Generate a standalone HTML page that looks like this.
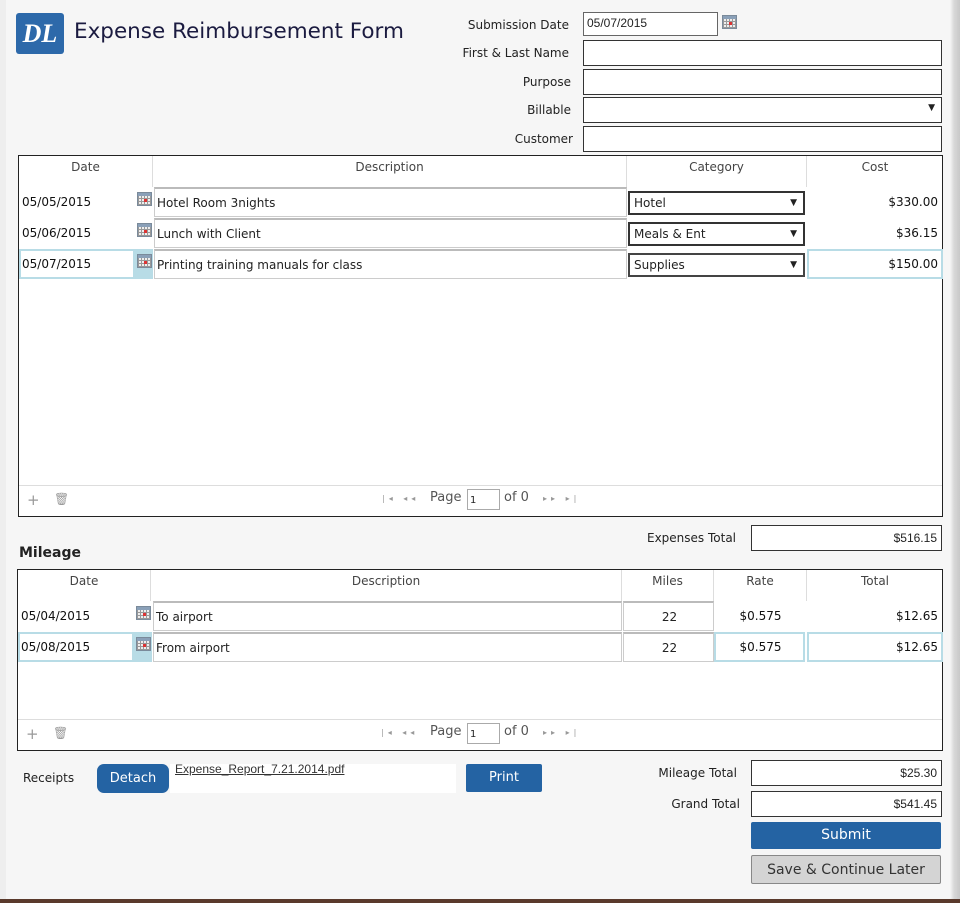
<!DOCTYPE html>
<html><head><meta charset="utf-8"><style>
*{box-sizing:border-box;margin:0;padding:0}
body{width:960px;height:903px;background:#f6f6f6;font-family:"DejaVu Sans","Liberation Sans",sans-serif;font-size:12px;color:#222;position:relative;overflow:hidden}
.a{position:absolute}
.lbl{position:absolute;text-align:right;font-size:12px;color:#222}
.inp{position:absolute;background:#fff;border:1px solid #333}
.tot{text-align:right;padding:0 4px;line-height:24px;font-size:12px;font-family:'Liberation Sans',sans-serif}
.cal{position:absolute;width:15px;height:14px;border:1px solid #7a8a9a;background:
linear-gradient(#8aa0b8 0 3px,transparent 3px),
repeating-linear-gradient(0deg,#999 0 1px,#eee 1px 3px),#eee}
.cal::before{content:"";position:absolute;inset:3px 0 0 0;background:repeating-linear-gradient(90deg,#999 0 1px,transparent 1px 3px)}
.cal::after{content:"";position:absolute;left:6px;top:6px;width:3px;height:3px;background:#d33}
.grid{position:absolute;background:#fff;border:1px solid #222}
.hd{position:absolute;top:0;height:31px;line-height:22px;text-align:center;color:#444;font-size:12px;border-right:1px solid #ddd}
.cell{position:absolute;height:30px;line-height:30px;font-size:12px;color:#111;white-space:nowrap}
.txt{position:absolute;background:#fff;border:1px solid #ccc;border-top:2px solid #bbb;height:30px;line-height:28px;padding-left:2px;font-size:12px}
.sel{position:absolute;background:#fff;border:2px solid #333;height:24px;line-height:20px;padding-left:4px;font-size:12px}
.sel::after{content:"▼";position:absolute;right:6px;font-size:9px}
.foc{border:2px solid #b8dce6!important}
.ft{position:absolute;left:0;right:0;bottom:0;height:31px;border-top:1px solid #ddd;color:#999}
.btn{position:absolute;background:#2463a3;color:#fff;text-align:center;font-size:13px}
</style></head><body>
<div class="a" style="right:0;top:0;width:10px;height:903px;background:linear-gradient(90deg,#f6f6f6,#d8d8d8 40%,#c8c8c8)"></div>
<div class="a" style="left:0;top:0;width:6px;height:903px;background:#eee"></div>
<div class="a" style="left:0;bottom:0;width:960px;height:4px;background:#5a3a2c"></div>

<div class="a" style="left:16px;top:13px;width:48px;height:41px;background:#2d69aa;border-radius:3px;color:#fff;font:italic bold 26px 'Liberation Serif',serif;line-height:41px;text-align:center">DL</div>
<div class="a" style="left:74px;top:19px;font-size:21.5px;color:#1b1b40">Expense Reimbursement Form</div>

<div class="lbl" style="left:400px;width:169px;top:18px">Submission Date</div>
<div class="lbl" style="left:400px;width:169px;top:46px">First &amp; Last Name</div>
<div class="lbl" style="left:400px;width:171px;top:75px">Purpose</div>
<div class="lbl" style="left:400px;width:171px;top:103px">Billable</div>
<div class="lbl" style="left:400px;width:173px;top:132px">Customer</div>
<div class="inp" style="left:583px;top:12px;width:135px;height:24px;border-color:#666;padding:0 3px;line-height:20px;font-size:12px;font-family:'Liberation Sans',sans-serif">05/07/2015</div>
<div class="cal" style="left:722px;top:15px"></div>
<div class="inp" style="left:583px;top:40px;width:359px;height:26px"></div>
<div class="inp" style="left:583px;top:69px;width:359px;height:26px"></div>
<div class="inp" style="left:583px;top:97px;width:359px;height:26px"><span style="position:absolute;right:6px;top:5px;font-size:9px">▼</span></div>
<div class="inp" style="left:583px;top:126px;width:359px;height:26px"></div>

<div class="grid" style="left:18px;top:155px;width:925px;height:362px">
<div class="hd" style="left:0;width:134px">Date</div>
<div class="hd" style="left:134px;width:474px">Description</div>
<div class="hd" style="left:608px;width:180px">Category</div>
<div class="hd" style="left:788px;width:136px;border:0">Cost</div>

<div class="cell" style="left:3px;top:31px">05/05/2015</div><div class="cal" style="left:118px;top:36px"></div>
<div class="txt" style="left:135px;top:31px;width:473px">Hotel Room 3nights</div>
<div class="sel" style="left:609px;top:35px;width:177px">Hotel</div>
<div class="cell" style="right:4px;top:31px">$330.00</div>

<div class="cell" style="left:3px;top:62px">05/06/2015</div><div class="cal" style="left:118px;top:67px"></div>
<div class="txt" style="left:135px;top:62px;width:473px">Lunch with Client</div>
<div class="sel" style="left:609px;top:66px;width:177px">Meals &amp; Ent</div>
<div class="cell" style="right:4px;top:62px">$36.15</div>

<div class="a foc" style="left:0;top:93px;width:134px;height:30px;background:#fff"></div>
<div class="a" style="left:114px;top:93px;width:20px;height:30px;background:#b8dce6"></div>
<div class="cell" style="left:3px;top:93px">05/07/2015</div><div class="cal" style="left:118px;top:98px"></div>
<div class="txt" style="left:135px;top:93px;width:473px">Printing training manuals for class</div>
<div class="sel" style="left:609px;top:97px;width:177px;border-color:#444">Supplies</div>
<div class="a foc" style="left:788px;top:93px;width:136px;height:30px;background:#fff"></div>
<div class="cell" style="right:4px;top:93px">$150.00</div>

<div class="ft"><span class="a" style="left:8px;top:5px;font-size:15px">+</span><span class="a" style="left:35px;top:6px;font-size:12px">🗑</span>
<span class="a" style="left:363px;top:8px;font-size:8px;letter-spacing:4px">|◂ ◂◂</span>
<span class="a" style="left:411px;top:4px;color:#555;font-size:13px">Page</span>
<span class="a" style="left:448px;top:3px;width:33px;height:21px;border:1px solid #aaa;background:#fff;color:#222;font-size:10px;padding:5px 2px">1</span>
<span class="a" style="left:485px;top:4px;color:#555;font-size:13px">of 0</span>
<span class="a" style="left:524px;top:8px;font-size:8px;letter-spacing:4px">▸▸ ▸|</span></div>
</div>

<div class="lbl" style="left:600px;width:136px;top:531px">Expenses Total</div>
<div class="inp tot" style="left:751px;top:525px;width:191px;height:26px">$516.15</div>
<div class="a" style="left:19px;top:545px;font-size:14px;font-weight:bold">Mileage</div>

<div class="grid" style="left:17px;top:569px;width:926px;height:182px">
<div class="hd" style="left:0;width:133px">Date</div>
<div class="hd" style="left:133px;width:471px">Description</div>
<div class="hd" style="left:604px;width:92px">Miles</div>
<div class="hd" style="left:696px;width:93px">Rate</div>
<div class="hd" style="left:789px;width:136px;border:0">Total</div>

<div class="cell" style="left:3px;top:31px">05/04/2015</div><div class="cal" style="left:118px;top:36px"></div>
<div class="txt" style="left:135px;top:31px;width:469px">To airport</div>
<div class="txt" style="left:605px;top:31px;width:91px;text-align:center">22</div>
<div class="cell" style="left:696px;width:93px;text-align:center;top:31px">$0.575</div>
<div class="cell" style="right:4px;top:31px">$12.65</div>

<div class="a foc" style="left:0;top:62px;width:133px;height:30px;background:#fff"></div>
<div class="a" style="left:114px;top:62px;width:20px;height:30px;background:#b8dce6"></div>
<div class="cell" style="left:3px;top:62px">05/08/2015</div><div class="cal" style="left:118px;top:67px"></div>
<div class="txt" style="left:135px;top:62px;width:469px">From airport</div>
<div class="txt" style="left:605px;top:62px;width:91px;text-align:center">22</div>
<div class="a foc" style="left:696px;top:62px;width:91px;height:30px;background:#fff"></div>
<div class="cell" style="left:696px;width:93px;text-align:center;top:62px">$0.575</div>
<div class="a foc" style="left:789px;top:62px;width:136px;height:30px;background:#fff"></div>
<div class="cell" style="right:4px;top:62px">$12.65</div>

<div class="ft"><span class="a" style="left:8px;top:5px;font-size:15px">+</span><span class="a" style="left:35px;top:6px;font-size:12px">🗑</span>
<span class="a" style="left:363px;top:8px;font-size:8px;letter-spacing:4px">|◂ ◂◂</span>
<span class="a" style="left:412px;top:4px;color:#555;font-size:13px">Page</span>
<span class="a" style="left:449px;top:3px;width:33px;height:21px;border:1px solid #aaa;background:#fff;color:#222;font-size:10px;padding:5px 2px">1</span>
<span class="a" style="left:486px;top:4px;color:#555;font-size:13px">of 0</span>
<span class="a" style="left:525px;top:8px;font-size:8px;letter-spacing:4px">▸▸ ▸|</span></div>
</div>

<div class="a" style="left:23px;top:771px">Receipts</div>
<div class="a" style="left:170px;top:764px;width:286px;height:29px;background:#fff"></div>
<div class="btn" style="left:97px;top:764px;width:72px;height:29px;line-height:29px;border-radius:7px">Detach</div>
<div class="a" style="left:175px;top:762px;font-family:'Liberation Sans',sans-serif;font-size:12px;text-decoration:underline;color:#333">Expense_Report_7.21.2014.pdf</div>
<div class="btn" style="left:466px;top:764px;width:76px;height:28px;line-height:28px;border-radius:2px">Print</div>

<div class="lbl" style="left:600px;width:137px;top:766px">Mileage Total</div>
<div class="inp tot" style="left:751px;top:760px;width:191px;height:26px">$25.30</div>
<div class="lbl" style="left:600px;width:140px;top:797px">Grand Total</div>
<div class="inp tot" style="left:751px;top:791px;width:191px;height:26px">$541.45</div>
<div class="btn" style="left:751px;top:822px;width:190px;height:27px;line-height:27px;font-size:14px;border-radius:2px">Submit</div>
<div class="a" style="left:751px;top:855px;width:190px;height:29px;line-height:28px;background:#d4d4d4;border:1px solid #888;border-radius:2px;text-align:center;font-size:14px;color:#333">Save &amp; Continue Later</div>
</body></html>
